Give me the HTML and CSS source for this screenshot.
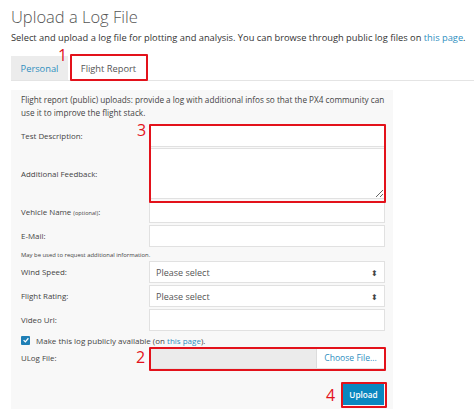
FILE: index.html
```html
<!DOCTYPE html>
<html>
<head>
<meta charset="utf-8">
<link rel="stylesheet" href="styles.css">
</head>
<body>
<div class="page">
  <h1 class="title">Upload a Log File</h1>
  <p class="lead">Select and upload a log file for plotting and analysis. You can browse through public log files on <a href="#">this page</a>.</p>
  <ul class="tabs">
    <li class="tab personal"><a href="#">Personal</a></li>
    <li class="tab active"><a href="#">Flight Report</a></li>
  </ul>
  <div class="panel">
    <p class="intro">Flight report (public) uploads: provide a log with additional infos so that the PX4 community can use it to improve the flight stack.</p>
    <div class="row first"><label>Test Description:</label><input class="field" type="text"></div>
    <div class="row"><label>Additional Feedback:</label><textarea class="field area"></textarea></div>
    <div class="row"><label>Vehicle Name <small>(optional)</small>:</label><input class="field" type="text"></div>
    <div class="row"><label>E-Mail:</label><input class="field" type="text"></div>
    <p class="help">May be used to request additional information.</p>
    <div class="row"><label>Wind Speed:</label><div class="field select"><span>Please select</span><span class="caret">&#x2B0D;</span></div></div>
    <div class="row"><label>Flight Rating:</label><div class="field select"><span>Please select</span><span class="caret">&#x2B0D;</span></div></div>
    <div class="row"><label>Video Url:</label><input class="field" type="text"></div>
    <div class="check"><span class="box"><svg viewBox="0 0 10 10" width="8" height="8"><path d="M2 5.2 L4.2 7.3 L8 2.8" fill="none" stroke="#fff" stroke-width="1.6"/></svg></span><span>Make this log publicly available (on <a href="#">this page</a>).</span></div>
    <div class="row"><label>ULog File:</label><div class="field file"><span class="filename"></span><span class="choose">Choose File...</span></div></div>
    <div class="actions"><button class="upload">Upload</button></div>
  </div>

  <div class="mark m1"></div><span class="num n1">1</span>
  <div class="mark m3"></div><span class="num n3">3</span>
  <div class="mark m2"></div><span class="num n2">2</span>
  <div class="mark m4"></div><span class="num n4">4</span>
</div>
</body>
</html>
```

FILE: styles.css
```css
* { box-sizing: border-box; }
html, body { margin: 0; padding: 0; background: #fff; }
body { font-family: "Open Sans", "Noto Sans", sans-serif; color: #444; width: 474px; height: 413px; overflow: hidden; }
a { color: #2f8fbf; text-decoration: none; }
.page { position: relative; padding: 0 0 0 11px; }
.title { margin: 0; padding-top: 5px; font-size: 16.5px; font-weight: 300; color: #555; line-height: 24px; }
.lead { margin: 2px 0 0; font-size: 9.3px; line-height: 13px; color: #333; white-space: nowrap; }
.tabs { list-style: none; margin: 12px 0 0; padding: 0; display: flex; gap: 2px; border-bottom: 1px solid #e4e4e4; height: 25px; }
.tab { display: flex; align-items: center; justify-content: center; height: 24px; font-size: 9.3px; background: #ececec; }
.tab.personal { width: 57px; }
.tab.active { width: 77px; background: #fff; }
.tab.active a { color: #555; }
.panel { margin-top: 9px; width: 382px; height: 319px; background: #f8f8f8; padding: 3px 8px 0 10px; }
.intro { margin: 0 0 6px; font-size: 8.2px; line-height: 13px; color: #444; }
.row { display: flex; align-items: center; margin-bottom: 2px; }
.row.first { margin-bottom: 1px; }
.row label { width: 128px; font-size: 7.9px; color: #444; }
.row label small { font-size: 5.6px; }
.field { width: 236px; height: 22px; border: 1px solid #e1e1e1; background: #fff; margin: 0; padding: 0 6px; font-family: inherit; }
.area { height: 51px; resize: vertical; display: block; }
.help { margin: 0; font-size: 5.9px; line-height: 12px; color: #444; }
.select { display: flex; align-items: center; justify-content: space-between; font-size: 9px; color: #555; }
.caret { font-size: 8px; color: #444; }
.check { display: flex; align-items: center; gap: 6px; height: 14px; margin: 0; font-size: 8px; color: #444; }
.box { width: 9px; height: 9px; background: #1f7fb6; border-radius: 1px; display: flex; align-items: center; justify-content: center; }
.file { display: flex; padding: 0; background: #ebebeb; }
.filename { flex: 1; }
.choose { width: 68px; background: #fff; border-left: 1px solid #dcdcdc; display: flex; align-items: center; justify-content: center; font-size: 8.6px; color: #2f8fbf; }
.actions { display: flex; justify-content: flex-end; margin-top: 14px; }
.upload { width: 41px; height: 22px; border: 0; background: #0a87c0; color: #fff; font-family: inherit; font-size: 8.2px; font-weight: 600; padding: 0; margin-right: 1px; }
.mark { position: absolute; border: 2px solid #e3121b; border-radius: 1px; }
.num { position: absolute; color: #e3121b; font-size: 16px; line-height: 12px; font-family: "Open Sans", sans-serif; }
.m1 { left: 70px; top: 54px; width: 78px; height: 27px; }
.n1 { left: 58px; top: 49px; }
.m3 { left: 149px; top: 124px; width: 237px; height: 79px; }
.n3 { left: 137px; top: 124px; }
.m2 { left: 149px; top: 347px; width: 237px; height: 24px; }
.n2 { left: 136px; top: 351px; }
.m4 { left: 341px; top: 382px; width: 46px; height: 26px; }
.n4 { left: 326px; top: 389px; }
```
